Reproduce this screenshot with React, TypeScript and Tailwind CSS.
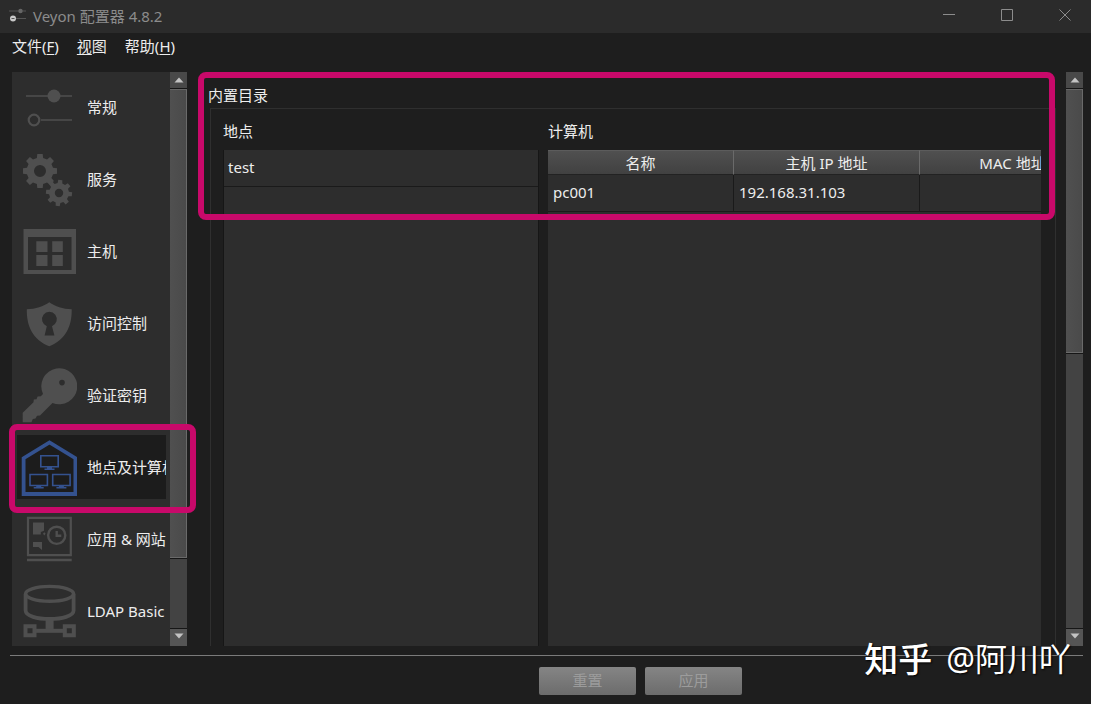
import React, { useState } from 'react';

const gearPath = (cx: number, cy: number, outer: number, inner: number, hole: number, turn: number) => {
  const teeth = 8;
  const step = (Math.PI * 2) / teeth;
  const at = (r: number, a: number) =>
    `${(cx + r * Math.sin(a)).toFixed(2)} ${(cy - r * Math.cos(a)).toFixed(2)}`;
  const points: string[] = [];
  for (let i = 0; i < teeth; i++) {
    const a = i * step + turn;
    points.push(at(inner, a - step * 0.3), at(outer, a - step * 0.2), at(outer, a + step * 0.2), at(inner, a + step * 0.3));
  }
  return `M${points.join('L')}ZM${cx - hole} ${cy}a${hole} ${hole} 0 1 0 ${hole * 2} 0a${hole} ${hole} 0 1 0 ${-hole * 2} 0Z`;
};

const Icon: React.FC<{ children: React.ReactNode; active?: boolean }> = ({ children, active }) => (
  <svg
    viewBox="0 0 56 64"
    className={`h-16 w-14 shrink-0 ${active ? 'text-[#34528f]' : 'text-[#4f4f4f]'}`}
    fill="currentColor"
    aria-hidden="true"
  >
    {children}
  </svg>
);

const GeneralIcon = () => (
  <Icon>
    <path d="M5 21h46M20 45h31" stroke="currentColor" strokeWidth="1.6" />
    <circle cx="33" cy="21" r="6.5" />
    <circle cx="13" cy="45" r="5.3" fill="none" stroke="currentColor" strokeWidth="2.2" />
  </Icon>
);

const ServiceIcon = () => (
  <Icon>
    <path fillRule="evenodd" d={gearPath(19, 24, 17.2, 13.4, 6, 0)} />
    <path fillRule="evenodd" d={gearPath(38, 46, 13.2, 10, 4.2, 0.1)} />
  </Icon>
);

const HostIcon = () => (
  <Icon>
    <path fillRule="evenodd" d="M2.5 10H55v45H2.5ZM7 18v33h43.5V18Z" />
    <path d="M15.3 22.3h11.2V33H15.3ZM31.2 22.3h10.6V33H31.2ZM15.3 36h11.2v11H15.3ZM31.2 36h10.6v11H31.2Z" />
  </Icon>
);

const AccessIcon = () => (
  <Icon>
    <path
      fillRule="evenodd"
      d="M28.3 11.3C34 15.5 42 18.2 50.7 18.2C51 35 45 48.5 28.3 55.2C11.5 48.5 5.5 35 5.8 18.2C14.5 18.2 22.5 15.5 28.3 11.3ZM25.8 35.2L23.6 44.5h9.8L31 35.2A7.4 7.4 0 1 0 25.8 35.2Z"
    />
  </Icon>
);

const KeyIcon = () => (
  <Icon>
    <path
      fillRule="evenodd"
      d="M22 31A18 18 0 1 1 31.5 40L19 52.5L16 52.8L14.5 55.5L11.8 56L10.5 59.3H1.7V49.8L12.5 39.2L12.8 36.5L15.5 36.2L16.6 33.5L19.8 33.3ZM38.2 19.6a2.8 2.8 0 1 0 5.6 0a2.8 2.8 0 1 0 -5.6 0Z"
    />
  </Icon>
);

const LocationIcon = () => (
  <Icon active>
    <g fill="none" stroke="currentColor">
      <path d="M2.6 59V23.2L28.5 7.4L54.4 23.2V59Z" strokeWidth="3.8" />
      <path d="M19.8 20.8h17.4v11H19.8ZM9 39.5h17.4v11H9ZM31.7 39.5h17.4v11H31.7Z" strokeWidth="1.6" />
    </g>
    <path d="M26 32h5v1.5h2.5v1.5h-10v-1.5H26ZM15.2 50.5h5V52h2.5v1.5h-10V52h2.5ZM37.9 50.5h5V52h2.5v1.5h-10V52h2.5Z" />
  </Icon>
);

const AppIcon = () => (
  <Icon>
    <path d="M7 10.8h42.8v37.4H7Z" fill="none" stroke="currentColor" strokeWidth="2.2" />
    <path d="M6 51.8h44.7v2.4H6Z" />
    <path d="M12 15.5h11v8.2l-3.2 1.2v2.6h-3.6L12 27.5ZM23.2 25.2l1.4 1.4l-1.2 1.8l-1.4-1.6ZM12 35h9v8l-3.5-3H12Z" />
    <circle cx="35.7" cy="28.3" r="8.6" fill="none" stroke="currentColor" strokeWidth="2.4" />
    <path d="M34.5 24h2.4v3.6h3.4V30h-5.8Z" />
  </Icon>
);

const LdapIcon = () => (
  <Icon>
    <g fill="none" stroke="currentColor">
      <ellipse cx="28.6" cy="14.8" rx="24" ry="7.4" strokeWidth="3.4" />
      <path d="M4.6 14.8V31.5C4.6 42.8 52.6 42.8 52.6 31.5V14.8" strokeWidth="3.8" />
      <path d="M28.6 40v11" strokeWidth="8" />
      <path d="M15 51.8h28" strokeWidth="4" />
      <path d="M4.5 47.2h9v9h-9ZM43.8 47.2h9v9h-9Z" strokeWidth="4" />
    </g>
  </Icon>
);

const pages = [
  { name: '常规', icon: GeneralIcon },
  { name: '服务', icon: ServiceIcon },
  { name: '主机', icon: HostIcon },
  { name: '访问控制', icon: AccessIcon },
  { name: '验证密钥', icon: KeyIcon },
  { name: '地点及计算机', icon: LocationIcon },
  { name: '应用 & 网站', icon: AppIcon },
  { name: 'LDAP Basic', icon: LdapIcon },
];

const computers = [{ name: 'pc001', ip: '192.168.31.103', mac: '' }];

// thumb is the share of the track that the handle takes
const ScrollBar: React.FC<{ thumb: number }> = ({ thumb }) => (
  <div className="flex w-[17px] shrink-0 flex-col gap-px bg-[#161616]">
    <button aria-label="向上滚动" className="flex h-4 items-center justify-center bg-[#494949]">
      <svg viewBox="0 0 10 6" className="h-1.5 w-2.5" fill="#c4c4c4"><path d="M5 0.5L9.5 5.5H0.5Z" /></svg>
    </button>
    <div className="min-h-0 flex-1 bg-[#434343]">
      <div
        className="border-t border-r border-b border-t-[#666] border-r-[#6a6a6a] border-b-[#6a6a6a] bg-linear-to-r from-[#505050] to-[#4a4a4a] shadow-[0_1px_0_#161616]"
        style={{ height: `${thumb}%` }}
      />
    </div>
    <button aria-label="向下滚动" className="flex h-[17px] items-start justify-center bg-[#555] pt-1">
      <svg viewBox="0 0 10 6" className="h-1.5 w-2.5" fill="#c4c4c4"><path d="M5 5.5L9.5 0.5H0.5Z" /></svg>
    </button>
  </div>
);

const TitleBar = () => (
  <header className="flex h-[33px] shrink-0 bg-[#2b2b2b] pl-2 text-[#8c8c8c]">
    <svg viewBox="0 0 19 16" className="mt-2 mr-1.5 h-4 w-[19px]" aria-hidden="true">
      <path d="M1 3h17M8 10.5h10" stroke="#555" strokeWidth="1.2" />
      <circle cx="12.5" cy="3" r="2.2" fill="#666" />
      <circle cx="5" cy="10.5" r="3" fill="#c9c9c9" />
      <path d="M3.5 10.5h3" stroke="#555" />
    </svg>
    <h1 className="flex-1 pt-1.5">Veyon 配置器 4.8.2</h1>
    <div className="flex gap-1.5">
      <button aria-label="最小化" className="flex h-[30px] w-[52px] items-center justify-center">
        <svg viewBox="0 0 12 12" className="h-3 w-3" stroke="currentColor"><path d="M0 5.5h12" /></svg>
      </button>
      <button aria-label="最大化" className="flex h-[30px] w-[52px] items-center justify-center">
        <svg viewBox="0 0 12 12" className="h-3 w-3" fill="none" stroke="currentColor"><path d="M0.5 0.5h11v11h-11Z" /></svg>
      </button>
      <button aria-label="关闭" className="flex h-[30px] w-[52px] items-center justify-center">
        <svg viewBox="0 0 12 12" className="h-3 w-3" stroke="currentColor"><path d="M0.5 0.5l11 11M11.5 0.5l-11 11" /></svg>
      </button>
    </div>
  </header>
);

const MenuBar = () => (
  <nav className="flex h-[26px] shrink-0 items-center gap-[18px] pl-3">
    <button>文件(<u className="underline-offset-2">F</u>)</button>
    <button><u className="underline-offset-2">视</u>图</button>
    <button>帮助(<u className="underline-offset-2">H</u>)</button>
  </nav>
);

const SideBar: React.FC<{ selected: string; onSelect: (name: string) => void }> = ({ selected, onSelect }) => (
  <aside className="relative flex w-[175px] shrink-0">
    <ul className="flex min-w-0 flex-1 flex-col gap-2 overflow-hidden bg-[#2d2d2d] pt-[3px] pr-1 pl-[5px]">
      {pages.map(({ name, icon: PageIcon }) => (
        <li key={name}>
          <button
            onClick={() => onSelect(name)}
            className={`flex h-16 w-full items-center gap-2.5 overflow-hidden pl-1 whitespace-nowrap ${
              selected === name ? 'bg-[#1c1c1c]' : ''
            }`}
          >
            <PageIcon />
            {name}
          </button>
        </li>
      ))}
    </ul>
    <ScrollBar thumb={87} />
    <div className="pointer-events-none absolute top-[352px] -right-[9px] -left-[3px] h-[89px] rounded-lg border-[6px] border-[#c8096a]" />
  </aside>
);

const Directory = () => (
  <main className="relative flex min-w-0 flex-1 flex-col overflow-hidden pr-2.5 pl-[21px]">
    <h2 className="pt-3 pb-0.5 leading-[22px]">内置目录</h2>
    <div className="ml-0.5 grid min-h-0 flex-1 grid-cols-[316fr_493fr] gap-[9px] border-x border-t border-[#2f2f2f] pt-3 pr-3.5 pl-3">
      <section className="flex min-w-0 flex-col">
        <h3 className="mb-[9px] leading-5">地点</h3>
        <ul className="flex-1 border-r border-l border-[#161616] bg-[#2d2d2d]">
          <li className="flex h-[37px] items-center border-b border-[#1a1a1a] pb-0.5 pl-1">test</li>
        </ul>
      </section>
      <section className="flex min-w-0 flex-col">
        <h3 className="mb-[9px] leading-5">计算机</h3>
        <div className="flex-1 overflow-hidden bg-[#2d2d2d]">
          <table className="w-[558px] table-fixed border-separate border-spacing-0">
            <thead>
              <tr className="h-[25px]">
                {['名称', '主机 IP 地址', 'MAC 地址'].map((head) => (
                  <th
                    key={head}
                    className="border-t border-r border-b border-t-[#5c5c5c] border-r-[#6a6a6a] border-b-[#222] bg-linear-to-b from-[#505050] to-[#414141] p-0 leading-[22px] font-normal"
                  >
                    {head}
                  </th>
                ))}
              </tr>
            </thead>
            <tbody>
              {computers.map((pc) => (
                <tr key={pc.name} className="h-[37px]">
                  <td className="border-r border-b border-[#1a1a1a] p-0 pb-[3px] pl-[5px]">{pc.name}</td>
                  <td className="border-r border-b border-[#1a1a1a] p-0 pb-[3px] pl-[5px]">{pc.ip}</td>
                  <td className="border-r border-b border-[#1a1a1a] p-0 pb-[3px] pl-[5px]">{pc.mac}</td>
                </tr>
              ))}
            </tbody>
          </table>
        </div>
      </section>
    </div>
    <div className="pointer-events-none absolute top-0 right-[11px] left-[11px] h-[148px] rounded-lg border-[6px] border-[#c8096a]" />
  </main>
);

export default function App() {
  const [selected, setSelected] = useState('地点及计算机');

  return (
    <div className="h-screen bg-white pr-[9px] pb-1 font-['Noto_Sans','Noto_Sans_CJK_SC',sans-serif] text-[15px] leading-5 text-[#ededed]">
      <div className="relative flex h-full flex-col overflow-hidden bg-[#1e1e1e]">
        <TitleBar />
        <MenuBar />
        <div className="mt-[13px] flex min-h-0 flex-1 pr-2 pl-3">
          <SideBar selected={selected} onSelect={setSelected} />
          <Directory />
          <ScrollBar thumb={49} />
        </div>
        <footer className="mr-2 ml-2.5 mt-[9px] flex shrink-0 justify-center gap-[9px] border-t border-[#7b7b7b] pt-[11px] pb-[9px] pl-[188px]">
          <button disabled className="h-7 w-[97px] rounded-xs bg-linear-to-b from-[#858585] to-[#6c6c6c] pb-0.5 text-[#9c9c9c]">重置</button>
          <button disabled className="h-7 w-[97px] rounded-xs bg-linear-to-b from-[#858585] to-[#6c6c6c] pb-0.5 text-[#9c9c9c]">应用</button>
        </footer>
        <div className="absolute right-5 bottom-[25px] flex items-center gap-3.5 leading-10 text-white [text-shadow:1px_1px_2px_#000]">
          <span className="text-[34px] font-medium">知乎</span>
          <span className="text-[32px]">@阿川吖</span>
        </div>
      </div>
    </div>
  );
}
